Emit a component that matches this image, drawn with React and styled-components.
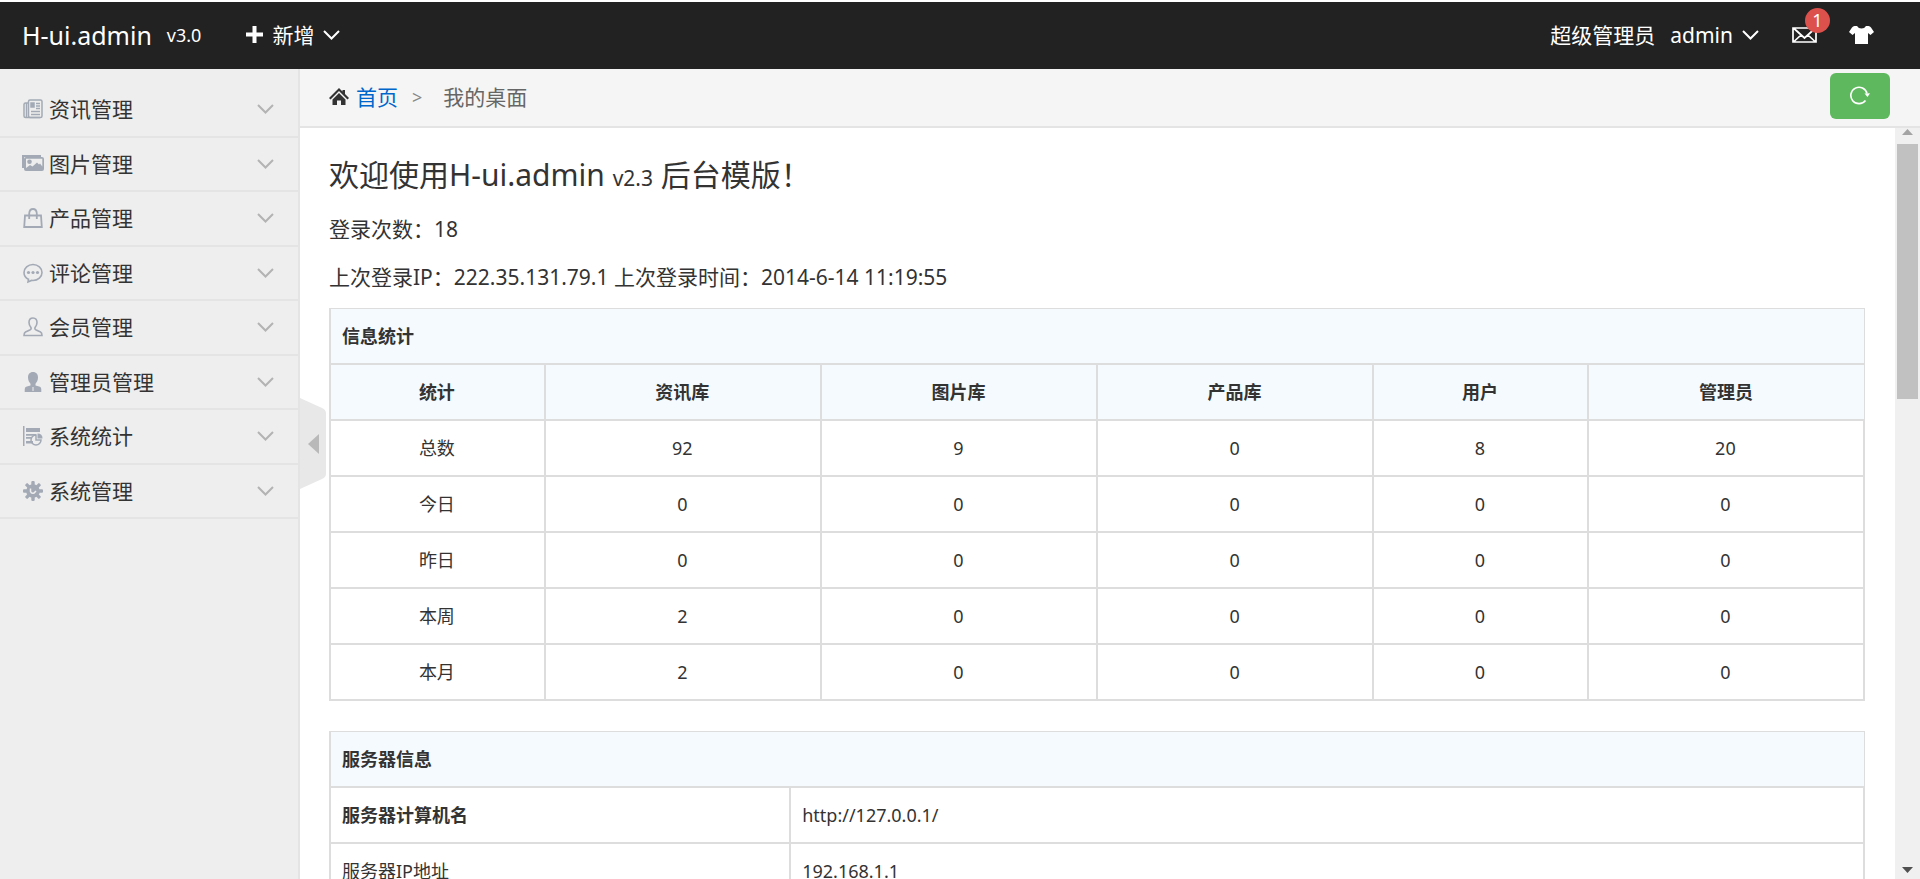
import React from "react";
import styled, { createGlobalStyle } from "styled-components";

const line = "#dddddd";

const GlobalStyle = createGlobalStyle`
  *, *::before, *::after { box-sizing: border-box; }
  body {
    margin: 0;
    background: #fff;
    color: #333;
    font-family: "Noto Sans", "Noto Sans CJK SC", sans-serif;
    font-size: 21px;
    line-height: 32px;
    overflow: hidden;
  }
  button { font: inherit; color: inherit; border: 0; background: none; padding: 0; cursor: pointer; }
  a { color: inherit; text-decoration: none; }
  svg { display: block; flex: none; }
`;

const Page = styled.div`
  display: flex;
  flex-direction: column;
  height: 100vh;
`;

const Header = styled.header`
  display: flex;
  align-items: center;
  justify-content: space-between;
  flex: none;
  height: 69px;
  padding: 0 46px 2px 22px;
  border-top: 2px solid #fff;
  background: #222;
  color: #fff;
`;

const HeaderGroup = styled.div`
  display: flex;
  align-items: center;
`;

const Brand = styled.a`
  font-size: 25px;
`;

const Version = styled.span`
  margin-left: 15px;
  font-size: 18px;
`;

const HeaderMenu = styled.button`
  display: flex;
  align-items: center;
  gap: 9px;
  margin-left: ${(p) => p.$gap}px;
`;

const MailLink = styled.a`
  position: relative;
  margin-left: 33px;
`;

const Badge = styled.span`
  position: absolute;
  top: -19px;
  right: -13px;
  min-width: 25px;
  height: 25px;
  border-radius: 13px;
  background: #dd514c;
  font-size: 18px;
  line-height: 24px;
  text-align: center;
`;

const SkinButton = styled.button`
  margin-left: 32px;
`;

const Body = styled.div`
  display: flex;
  flex: 1;
  min-height: 0;
`;

const Sidebar = styled.aside`
  flex: none;
  width: 300px;
  padding-top: 14px;
  border-right: 2px solid #e4e4e4;
  background: #eee;
`;

const Menu = styled.nav`
  display: grid;
  grid-template-rows: repeat(8, 1fr);
  height: 436px;
`;

const MenuItem = styled.button`
  display: flex;
  align-items: center;
  gap: 6px;
  padding: 0 24px 0 23px;
  border-bottom: 2px solid #e4e4e4;
  text-align: left;
`;

const MenuLabel = styled.span`
  flex: 1;
`;

const Main = styled.main`
  position: relative;
  display: flex;
  flex: 1;
  flex-direction: column;
  min-width: 0;
`;

const Breadcrumb = styled.nav`
  display: flex;
  align-items: center;
  flex: none;
  height: 59px;
  padding: 0 30px 2px 29px;
  border-bottom: 2px solid #e4e4e4;
  background: #f5f5f5;
`;

const HomeLink = styled.a`
  margin-left: 7px;
  color: #06c;
`;

const Separator = styled.span`
  margin: 0 21px 0 14px;
  font-size: 18px;
  color: #888;
`;

const Current = styled.span`
  flex: 1;
  color: #666;
`;

const RefreshButton = styled.button`
  display: flex;
  align-items: center;
  justify-content: center;
  width: 60px;
  height: 46px;
  margin-bottom: 2px;
  border-radius: 6px;
  background: #5eb95e;
`;

const Viewport = styled.div`
  display: flex;
  flex: 1;
  min-height: 0;
`;

const Content = styled.article`
  flex: 1;
  min-width: 0;
  padding: 24px 30px 0 29px;
  overflow: hidden;
`;

const Title = styled.h1`
  margin: 0;
  font-size: 30px;
  font-weight: 400;
  line-height: 45px;
`;

const TitleVersion = styled.span`
  font-size: 21px;
  line-height: 1;
`;

const Info = styled.p`
  margin: 16px 0 0;
`;

const Table = styled.table`
  width: 100%;
  margin-top: ${(p) => p.$gap}px;
  table-layout: fixed;
  border-collapse: separate;
  border-spacing: 0;
  border-top: 1px solid ${line};
  border-left: 2px solid ${line};
  font-size: 18px;
  line-height: 30px;
`;

const HeadCell = styled.th`
  padding: 12px 12px 12px 11px;
  border-right: 2px solid ${line};
  border-bottom: 2px solid ${line};
  background: #f5fafe;
  text-align: ${(p) => p.$align || "center"};
  &:last-child { border-right-width: 1px; }
`;

const RowHead = styled.th`
  padding: 12px 12px 12px 11px;
  border-right: 2px solid ${line};
  border-bottom: 2px solid ${line};
  text-align: left;
  font-weight: ${(p) => (p.$strong ? 700 : 400)};
`;

const Cell = styled.td`
  padding: 12px 12px 12px 11px;
  border-right: 2px solid ${line};
  border-bottom: 2px solid ${line};
  text-align: ${(p) => p.$align || "center"};
`;

const Scrollbar = styled.div`
  display: flex;
  flex: none;
  flex-direction: column;
  align-items: center;
  width: 25px;
  background: #f0f0f0;
`;

const Thumb = styled.div`
  width: 21px;
  height: 34%;
  margin: 9px 0 auto;
  background: #c1c1c1;
`;

const ScrollArrow = styled.svg`
  width: 11px;
  height: 6px;
  margin: ${(p) => (p.$down ? "0 0 6px" : "1px 0 0")};
  fill: ${(p) => (p.$down ? "#505050" : "#a3a3a3")};
`;

const Collapse = styled.button`
  position: absolute;
  top: 329px;
  left: 0;
`;

const Chevron = ({ color = "#fff", width = 2 }) => (
  <svg width="17" height="10" viewBox="0 0 17 10" fill="none" stroke={color} strokeWidth={width}>
    <path d="M1 1l7.500 7.500L16 1" />
  </svg>
);

const iconPaths = {
  news: (
    <g fill="none" stroke="currentColor" strokeWidth="1.500">
      <rect x="5.500" y="1" width="13.500" height="17.500" rx="1.500" />
      <path d="M5.500 4H2.500Q1 4 1 5.500V17q0 1.500 1.500 1.500H17M3.500 4v14M8 12.500h9M8 15.500h9M13 4.500h4M13 7h4M13 9.500h4" />
      <rect x="8" y="4" width="3" height="4" fill="currentColor" />
    </g>
  ),
  pictures: (
    <>
      <path d="M-1 1h19v2H1v11h-2z" fill="currentColor" />
      <path fillRule="evenodd" d="M3 3h16q2 0 2 2v10q0 2-2 2H3q-2 0-2-2V5q0-2 2-2zM3 4.800v9.200l4-3 2.500 1.500L14 8.500l2 2 1-1 2.300 3V4.800z" fill="currentColor" />
      <circle cx="6.500" cy="7.800" r="2.300" fill="currentColor" />
    </>
  ),
  bag: (
    <path d="M2 7.500h16l.800 11.500H1.200zM6.200 11V5.500Q6.500 1 10 1t3.800 4.500V11" fill="none" stroke="currentColor" strokeWidth="1.800" />
  ),
  comment: (
    <>
      <path d="M5.500 16.300C2.800 15 1 12.500 1 9.500c0-4.500 4-8 9-8s9 3.500 9 8-4 8-9 8l-1.500-.100L5 19z" fill="none" stroke="currentColor" strokeWidth="1.600" />
      <g fill="currentColor"><circle cx="5.500" cy="9.500" r="1.600" /><circle cx="10" cy="9.500" r="1.600" /><circle cx="14.500" cy="9.500" r="1.600" /></g>
    </>
  ),
  member: (
    <path d="M10 1c-2.800 0-4 2-4 4.500 0 2 .800 3.500 1.800 4.800.800 1.200.200 2-1 2.700L2.500 15Q1 15.800 1 18.500h18q0-2.700-1.500-3.500l-4.300-2c-1.200-.700-1.800-1.500-1-2.700C13.200 9 14 7.500 14 5.500 14 3 12.800 1 10 1z" fill="none" stroke="currentColor" strokeWidth="1.600" />
  ),
  admin: (
    <path fillRule="evenodd" d="M10 0c3.300 0 5 2.300 5 5.500 0 2.700-1.300 5-2.500 6.200v1.800l4.500 1.200q1.300.500 1.300 2.800V20H1.700v-2.500q0-2.300 1.300-2.800l4.500-1.200v-1.800C6.300 10.500 5 8.200 5 5.500 5 2.300 6.700 0 10 0zM9.500 15v4h1v-4z" fill="currentColor" />
  ),
  stats: (
    <>
      <path d="M0 0h1.500v20H0zM3 2h14v4H3zM3 8h10v1.700H3zM3 11h6v1.700H3zM3 15h7v2.500H3z" fill="currentColor" />
      <path d="M13 9a5 5 0 1 0 5 5h-5z" fill="none" stroke="currentColor" strokeWidth="1.500" />
      <path d="M14.500 7.500v5h5q0-5-5-5z" fill="currentColor" />
    </>
  ),
  gear: (
    <>
      <g fill="currentColor">
        {[0, 45, 90, 135].map((angle) => (
          <rect key={angle} x="8.300" y="0" width="3.400" height="20" rx="1" transform={`rotate(${angle} 10 10)`} />
        ))}
        <circle cx="10" cy="10" r="6.800" />
      </g>
      <path d="M7.500 7.500v3q1 2.500 3.500 1.500l2-2" fill="none" stroke="#eee" strokeWidth="1.500" />
    </>
  ),
};

const MenuIcon = ({ name }) => (
  <svg width="20" height="20" viewBox="0 0 20 20" color="#a3aab5" overflow="visible">
    {iconPaths[name]}
  </svg>
);

const menu = [
  ["news", "资讯管理"],
  ["pictures", "图片管理"],
  ["bag", "产品管理"],
  ["comment", "评论管理"],
  ["member", "会员管理"],
  ["admin", "管理员管理"],
  ["stats", "系统统计"],
  ["gear", "系统管理"],
];

const columns = [
  ["统计", "14%"],
  ["资讯库", "18%"],
  ["图片库", "18%"],
  ["产品库", "18%"],
  ["用户", "14%"],
  ["管理员", "18%"],
];

const stats = [
  ["总数", 92, 9, 0, 8, 20],
  ["今日", 0, 0, 0, 0, 0],
  ["昨日", 0, 0, 0, 0, 0],
  ["本周", 2, 0, 0, 0, 0],
  ["本月", 2, 0, 0, 0, 0],
];

const server = [
  ["服务器计算机名", "http://127.0.0.1/"],
  ["服务器IP地址", "192.168.1.1"],
];

export default function App() {
  return (
    <Page>
      <GlobalStyle />
      <Header>
        <HeaderGroup>
          <Brand href="#">H-ui.admin</Brand>
          <Version>v3.0</Version>
          <HeaderMenu $gap={45}>
            <svg width="17" height="17" viewBox="0 0 17 17" fill="#fff">
              <path d="M6.500 0h4v6.500H17v4h-6.500V17h-4v-6.500H0v-4h6.500z" />
            </svg>
            <span>新增</span>
            <Chevron />
          </HeaderMenu>
        </HeaderGroup>
        <HeaderGroup>
          <span>超级管理员</span>
          <HeaderMenu $gap={15}>
            <span>admin</span>
            <Chevron />
          </HeaderMenu>
          <MailLink href="#" aria-label="消息">
            <svg width="25" height="16" viewBox="0 0 25 16" fill="none" stroke="#fff" strokeWidth="1.700">
              <path d="M1 1h23v14H1zM2 1.500L12.500 11 23 1.500M2 14.500l7-6.500M23 14.500L16 8" />
            </svg>
            <Badge>1</Badge>
          </MailLink>
          <SkinButton aria-label="换肤">
            <svg width="25" height="18" viewBox="0 0 25 18" fill="#fff">
              <path d="M8 0q1.500 2.500 4.500 2.500T17 0h2.500q1.500.300 2.500 1.500L25 6l-3.500 3-2.500-2v11H6V7L3.500 9 0 6l3-4.500Q4 .300 5.500 0z" />
            </svg>
          </SkinButton>
        </HeaderGroup>
      </Header>
      <Body>
        <Sidebar>
          <Menu>
            {menu.map(([icon, label]) => (
              <MenuItem key={label}>
                <MenuIcon name={icon} />
                <MenuLabel>{label}</MenuLabel>
                <Chevron color="#b3b3b3" />
              </MenuItem>
            ))}
          </Menu>
        </Sidebar>
        <Main>
          <Breadcrumb>
            <svg width="20" height="17" viewBox="0 0 20 17" fill="#333">
              <path d="M10 0l3.500 3.500V2H16v4l4 4-1.500 1.500L10 3 1.500 11.500 0 10z" />
              <path d="M10 5l6.500 6.500V17H12v-4.500H8V17H3.500v-5.500z" />
            </svg>
            <HomeLink href="#">首页</HomeLink>
            <Separator>&gt;</Separator>
            <Current>我的桌面</Current>
            <RefreshButton aria-label="刷新">
              <svg width="20" height="19" viewBox="0 0 20 19" fill="none" stroke="#fff" strokeWidth="1.600">
                <path d="M15.500 14.500A8.200 8.200 0 1 1 17 7.500" />
                <path d="M14.500 7.500L20 7.300l-2.500 3.700z" fill="#fff" stroke="none" />
              </svg>
            </RefreshButton>
          </Breadcrumb>
          <Viewport>
            <Content>
              <Title>
                欢迎使用H-ui.admin <TitleVersion>v2.3</TitleVersion> 后台模版！
              </Title>
              <Info>登录次数：18</Info>
              <Info>上次登录IP：222.35.131.79.1 上次登录时间：2014-6-14 11:19:55</Info>
              <Table $gap={15}>
                <colgroup>
                  {columns.map(([name, width]) => (
                    <col key={name} width={width} />
                  ))}
                </colgroup>
                <thead>
                  <tr>
                    <HeadCell colSpan={6} $align="left">信息统计</HeadCell>
                  </tr>
                  <tr>
                    {columns.map(([name]) => (
                      <HeadCell key={name}>{name}</HeadCell>
                    ))}
                  </tr>
                </thead>
                <tbody>
                  {stats.map((row) => (
                    <tr key={row[0]}>
                      {row.map((value, i) => (
                        <Cell key={i}>{value}</Cell>
                      ))}
                    </tr>
                  ))}
                </tbody>
              </Table>
              <Table $gap={30}>
                <colgroup>
                  <col width="30%" />
                  <col width="70%" />
                </colgroup>
                <thead>
                  <tr>
                    <HeadCell colSpan={2} $align="left">服务器信息</HeadCell>
                  </tr>
                </thead>
                <tbody>
                  {server.map(([name, value], i) => (
                    <tr key={name}>
                      <RowHead scope="row" $strong={i === 0}>{name}</RowHead>
                      <Cell $align="left">{value}</Cell>
                    </tr>
                  ))}
                </tbody>
              </Table>
            </Content>
            <Scrollbar aria-hidden="true">
              <ScrollArrow viewBox="0 0 11 6"><path d="M5.500 0L11 6H0z" /></ScrollArrow>
              <Thumb />
              <ScrollArrow $down viewBox="0 0 11 6"><path d="M0 0h11L5.500 6z" /></ScrollArrow>
            </Scrollbar>
          </Viewport>
          <Collapse aria-label="收起菜单">
            <svg width="27" height="92" viewBox="0 0 27 92">
              <path d="M0 0l22 10q4 2 4 5v61q0 3-4 5L0 91z" fill="#e8e8e8" />
              <path d="M19 36v20L8 46z" fill="#b9b9b9" />
            </svg>
          </Collapse>
        </Main>
      </Body>
    </Page>
  );
}
